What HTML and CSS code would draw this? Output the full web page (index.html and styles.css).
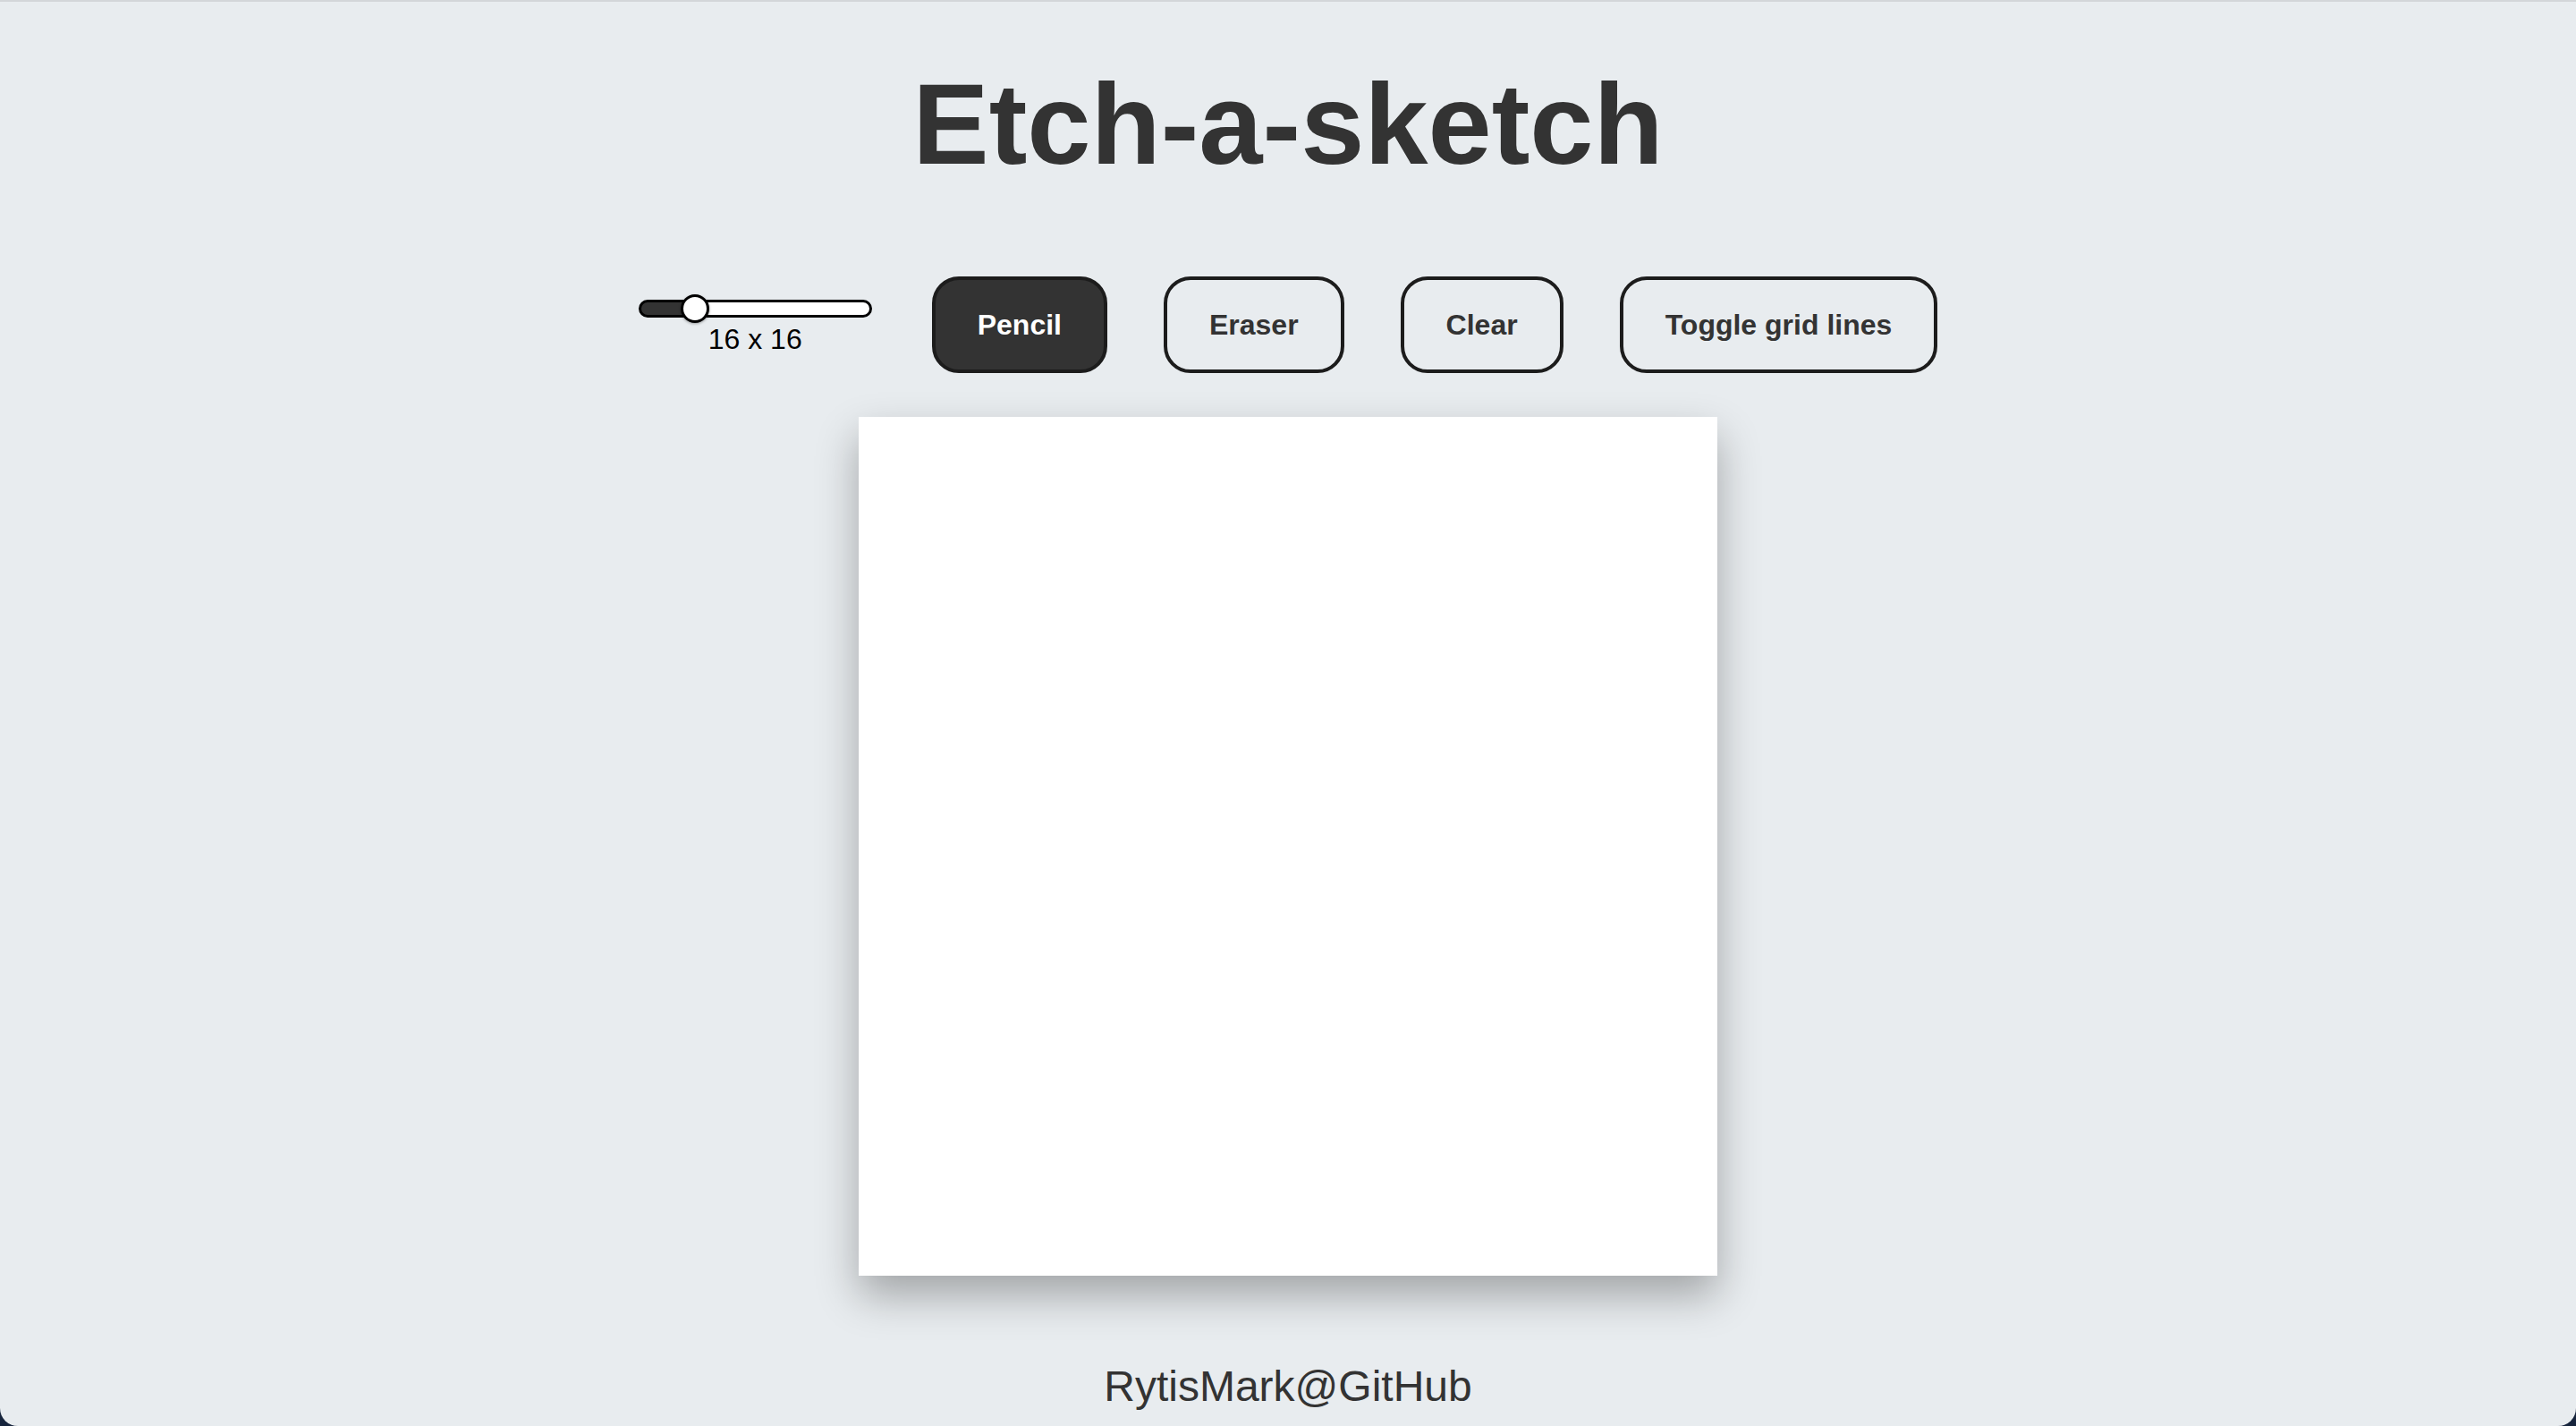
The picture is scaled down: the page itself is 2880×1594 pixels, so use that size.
FILE: index.html
```html
<!DOCTYPE html>
<html lang="en">
<head>
<meta charset="utf-8">
<title>Etch-a-sketch</title>
<link rel="stylesheet" href="styles.css">
</head>
<body>
<main class="page">
  <h1 class="title">Etch-a-sketch</h1>
  <div class="controls">
    <div class="size-control">
      <input class="size-slider" type="range" min="4" max="64" value="16" aria-label="Grid size">
      <div class="size-label">16 x 16</div>
    </div>
    <button class="btn btn-active" type="button">Pencil</button>
    <button class="btn" type="button">Eraser</button>
    <button class="btn" type="button">Clear</button>
    <button class="btn" type="button">Toggle grid lines</button>
  </div>
  <div class="board"></div>
  <footer class="footer">RytisMark@GitHub</footer>
</main>
</body>
</html>
```
FILE: styles.css
```css
html {
  margin: 0;
  padding: 0;
  background: #17253d;
}

body {
  margin: 0;
  height: 100vh;
  box-sizing: border-box;
  border-top: 2px solid #d3d6d9;
  background: #e8ecef;
  border-radius: 0 0 20px 20px;
  overflow: hidden;
  font-family: "Liberation Sans", Arial, Helvetica, sans-serif;
  color: #333;
}

.page {
  display: flex;
  flex-direction: column;
  align-items: center;
}

.title {
  margin: 63px 0 0;
  font-size: 128px;
  line-height: 147px;
  font-weight: 700;
  color: #333;
}

.controls {
  margin-top: 97px;
  display: flex;
  align-items: center;
  justify-content: center;
  gap: 63px;
}

.size-control {
  display: flex;
  flex-direction: column;
  align-items: center;
  width: 261px;
  margin-right: 4px;
}

.size-slider {
  -webkit-appearance: none;
  appearance: none;
  display: block;
  margin: 6px 0;
  width: 261px;
  height: 20px;
  box-sizing: border-box;
  border: 3px solid #000;
  border-radius: 10px;
  background: linear-gradient(to right, #333 0 63px, #fff 63px);
  outline: none;
}

.size-slider::-webkit-slider-thumb {
  -webkit-appearance: none;
  appearance: none;
  width: 32px;
  height: 32px;
  box-sizing: border-box;
  border-radius: 50%;
  border: 3px solid #000;
  background: #fff;
  box-shadow: 0 1px 3px rgba(0, 0, 0, 0.35);
  cursor: pointer;
}

.size-label {
  font-size: 32px;
  line-height: 37px;
  color: #000;
}

.btn {
  height: 108px;
  box-sizing: border-box;
  padding: 0 47px;
  border: 4px solid #1c1c1c;
  border-radius: 30px;
  background: transparent;
  color: #333;
  font-family: "Liberation Sans", Arial, Helvetica, sans-serif;
  font-size: 32px;
  font-weight: 700;
  line-height: 37px;
  cursor: pointer;
}

.btn-active {
  background: #333;
  color: #fff;
}

.board {
  margin-top: 49px;
  width: 960px;
  height: 960px;
  background: #fff;
  box-shadow: 0 22px 44px rgba(0, 0, 0, 0.3);
}

.footer {
  margin-top: 96px;
  font-size: 48px;
  line-height: 55px;
  color: #333;
}
```
